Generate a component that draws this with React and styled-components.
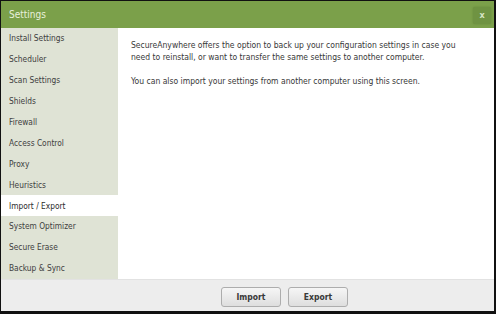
import React from "react";
import styled, { createGlobalStyle } from "styled-components";

const Global = createGlobalStyle`
  html, body { margin: 0; padding: 0; background: #fff; }
  body { font-family: "DejaVu Sans Condensed", "DejaVu Sans", sans-serif; }
`;

const Window = styled.div`
  width: 496px;
  height: 314px;
  box-sizing: border-box;
  border-style: solid;
  border-color: #111;
  border-width: 1px 2px 3px 1px;
  display: flex;
  flex-direction: column;
  background: #fff;
`;

const TitleBar = styled.div`
  height: 27px;
  flex: none;
  background: #7ba04a;
  display: flex;
  align-items: center;
  justify-content: space-between;
  padding: 0 3px 0 8px;
  box-sizing: border-box;
`;

const Title = styled.div`
  color: #e9f0dc;
  font-size: 10px;
  font-stretch: condensed;
`;

const Close = styled.div`
  width: 18px;
  height: 17px;
  background: #6f9342;
  border-radius: 2px;
  box-shadow: 0 0 2px rgba(60, 90, 30, 0.35);
  color: #d6e4c2;
  font-size: 9px;
  font-weight: bold;
  display: flex;
  align-items: center;
  justify-content: center;
  margin-top: 1px;
`;

const Body = styled.div`
  flex: 1;
  display: flex;
  min-height: 0;
`;

const Sidebar = styled.div`
  width: 117px;
  flex: none;
  background: #dfe3d5;
  display: flex;
  flex-direction: column;
`;

const Item = styled.div`
  height: 20.9px;
  display: flex;
  align-items: center;
  padding-left: 8px;
  font-size: 8.3px;
  font-stretch: condensed;
  color: ${(p) => (p.$active ? "#2a2a2a" : "#404040")};
  background: ${(p) => (p.$active ? "#fff" : "transparent")};
`;

const Content = styled.div`
  flex: 1;
  padding: 11px 0 0 13px;
  color: #383838;
  font-size: 8.5px;
  font-stretch: condensed;
  line-height: 12px;
`;

const Para = styled.p`
  margin: 0 0 12px 0;
`;

const Footer = styled.div`
  height: 32px;
  flex: none;
  background: #ededed;
  border-top: 1px solid #e2e2e2;
  box-sizing: border-box;
  display: flex;
  align-items: center;
  padding-left: 220px;
  gap: 7px;
`;

const Button = styled.button`
  width: 60px;
  height: 20px;
  margin-top: 2px;
  border: 1px solid #adadad;
  border-radius: 3px;
  background: linear-gradient(#f6f6f6, #dedede);
  color: #383838;
  font-family: "DejaVu Sans Condensed", "DejaVu Sans", sans-serif;
  font-stretch: condensed;
  font-weight: bold;
  font-size: 8.5px;
  padding: 0;
`;

const items = [
  "Install Settings",
  "Scheduler",
  "Scan Settings",
  "Shields",
  "Firewall",
  "Access Control",
  "Proxy",
  "Heuristics",
  "Import / Export",
  "System Optimizer",
  "Secure Erase",
  "Backup & Sync",
];

export default function App() {
  return (
    <>
      <Global />
      <Window>
        <TitleBar>
          <Title>Settings</Title>
          <Close>x</Close>
        </TitleBar>
        <Body>
          <Sidebar>
            {items.map((t) => (
              <Item key={t} $active={t === "Import / Export"}>
                {t}
              </Item>
            ))}
          </Sidebar>
          <Content>
            <Para>
              SecureAnywhere offers the option to back up your configuration settings in case you
              <br />
              need to reinstall, or want to transfer the same settings to another computer.
            </Para>
            <Para>You can also import your settings from another computer using this screen.</Para>
          </Content>
        </Body>
        <Footer>
          <Button>Import</Button>
          <Button>Export</Button>
        </Footer>
      </Window>
    </>
  );
}
